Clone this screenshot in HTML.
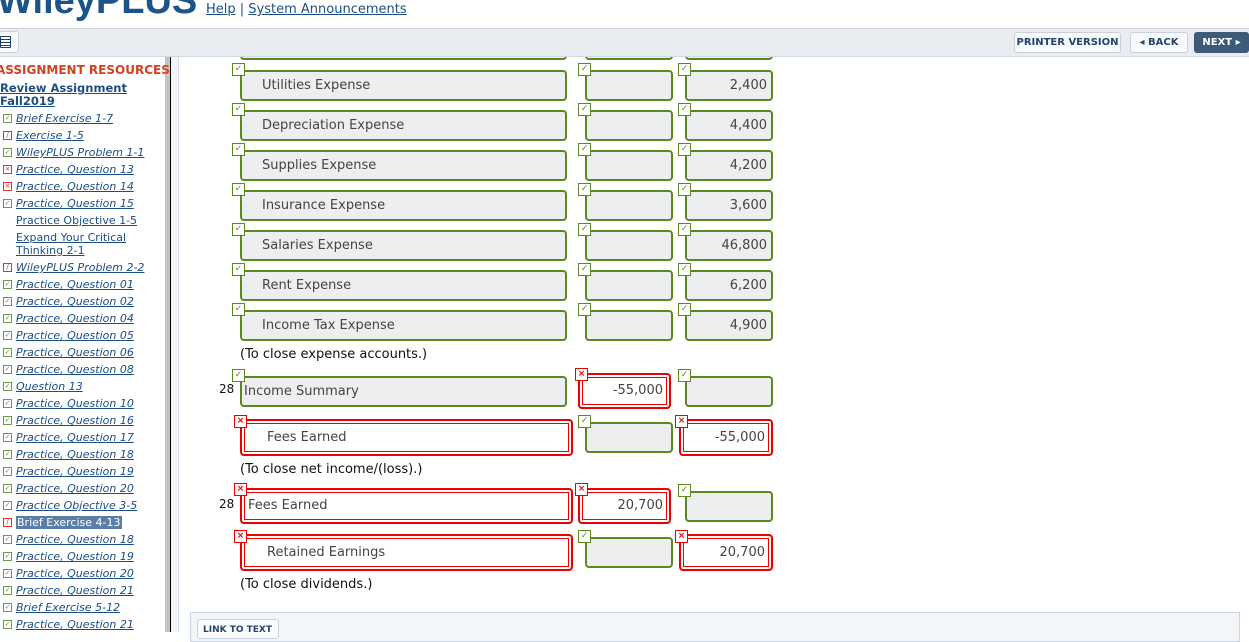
<!DOCTYPE html>
<html><head><meta charset="utf-8"><style>
*{margin:0;padding:0;box-sizing:border-box}
body{width:1249px;height:632px;overflow:hidden;background:#fff;font-family:Verdana,"DejaVu Sans","Liberation Sans",sans-serif;position:relative}
.a{position:absolute}
.logo{left:-3px;top:-20px;font:bold 38px "Liberation Sans",sans-serif;color:#1c5489;z-index:3}
.hl{left:206px;top:2px;font-size:13px;color:#1c4e86;z-index:3}
.hl u{color:#1c4e86}
.bar{left:0;top:28px;width:1249px;height:29px;background:#e9edf1;border-top:1px solid #cfd6de;border-bottom:1px solid #d4dae1;z-index:2}
.btn{top:32px;height:21px;border:1px solid #c9d1da;border-radius:3px;background:#f7f9fb;font:bold 10px "DejaVu Sans",sans-serif;color:#27446b;line-height:19px;text-align:center;z-index:3;white-space:nowrap}
.ar{left:-4px;top:63px;font:bold 12px "DejaVu Sans",sans-serif;color:#d5401e}
.ra{left:0;top:82px;font:bold 11.5px "DejaVu Sans",sans-serif;color:#1c4e86;text-decoration:underline;line-height:13px}
.li{left:16px;font:italic 11px "DejaVu Sans",sans-serif;color:#1c4e86;text-decoration:underline;white-space:nowrap}
.li.n{font-style:normal}
.ic{left:3px;width:9px;height:9px;border:1px solid #6c9a4a;font-size:7px;line-height:7px;text-align:center;color:#6c9a4a}
.ic.r{border-color:#d33;color:#d33}
.box{border:2px solid #5a8a1f;border-radius:4px;background:#eceeef;font:13px "DejaVu Sans",sans-serif;color:#444;line-height:27px}
.rb{border:2px solid #e00;border-radius:4px;background:#fff;box-shadow:inset 0 0 0 2px #fff,inset 0 0 0 3px #e00;font:13px "DejaVu Sans",sans-serif;color:#444}
.ck{width:13px;height:13px;background:#fff;border:1px solid #5a8a1f;font-size:9px;line-height:10px;text-align:center;color:#5a8a1f}
.ck.x{border-color:#e00;color:#e00;font-weight:bold}
.t{font:13px "DejaVu Sans",sans-serif;color:#111}
.num{text-align:right;padding-right:4px}
</style></head><body>
<div class="a logo">WileyPLUS</div>
<div class="a hl"><u>Help</u> | <u>System Announcements</u></div>
<div class="a bar"></div>
<div class="a" style="left:-2px;top:31px;width:21px;height:22px;border:1px solid #c9d1da;border-radius:3px;background:#f7f9fb;z-index:3"></div>
<div class="a" style="left:0;top:36px;width:11px;height:12px;border:1.5px solid #1c3e6b;border-radius:1px;background:repeating-linear-gradient(#fff 0 2px,#1c3e6b 2px 3px);z-index:3"></div>
<div class="a btn" style="left:1014px;width:107px">PRINTER VERSION</div>
<div class="a btn" style="left:1130px;width:58px">◂ BACK</div>
<div class="a btn" style="left:1194px;width:55px;background:#3d5a7a;border-color:#3d5a7a;color:#fff">NEXT ▸</div>
<div class="a" style="left:165px;top:57px;width:5px;height:575px;background:#c4c4c4"></div>
<div class="a" style="left:170px;top:57px;width:1px;height:575px;background:#000"></div>
<div class="a" style="left:171px;top:57px;width:8px;height:575px;background:#f2f6fa;border-right:1px solid #d8e0e8"></div>
<div class="a ar">ASSIGNMENT RESOURCES</div>
<div class="a ra">Review Assignment<br>Fall2019</div>

<div class="a ic" style="top:114px">✓</div><div class="a li" style="top:112px">Brief Exercise 1-7</div>
<div class="a ic r" style="top:131px">/</div><div class="a li" style="top:129px">Exercise 1-5</div>
<div class="a ic" style="top:148px">✓</div><div class="a li" style="top:146px">WileyPLUS Problem 1-1</div>
<div class="a ic r" style="top:165px">×</div><div class="a li" style="top:163px">Practice, Question 13</div>
<div class="a ic r" style="top:182px">×</div><div class="a li" style="top:180px">Practice, Question 14</div>
<div class="a ic" style="top:199px">✓</div><div class="a li" style="top:197px">Practice, Question 15</div>
<div class="a li n" style="top:214px">Practice Objective 1-5</div>
<div class="a li n" style="top:231px;line-height:13px">Expand Your Critical<br>Thinking 2-1</div>
<div class="a ic r" style="top:263px">/</div><div class="a li" style="top:261px">WileyPLUS Problem 2-2</div>
<div class="a ic" style="top:280px">✓</div><div class="a li" style="top:278px">Practice, Question 01</div>
<div class="a ic" style="top:297px">✓</div><div class="a li" style="top:295px">Practice, Question 02</div>
<div class="a ic" style="top:314px">✓</div><div class="a li" style="top:312px">Practice, Question 04</div>
<div class="a ic" style="top:331px">✓</div><div class="a li" style="top:329px">Practice, Question 05</div>
<div class="a ic" style="top:348px">✓</div><div class="a li" style="top:346px">Practice, Question 06</div>
<div class="a ic" style="top:365px">✓</div><div class="a li" style="top:363px">Practice, Question 08</div>
<div class="a ic" style="top:382px">✓</div><div class="a li" style="top:380px">Question 13</div>
<div class="a ic" style="top:399px">✓</div><div class="a li" style="top:397px">Practice, Question 10</div>
<div class="a ic" style="top:416px">✓</div><div class="a li" style="top:414px">Practice, Question 16</div>
<div class="a ic" style="top:433px">✓</div><div class="a li" style="top:431px">Practice, Question 17</div>
<div class="a ic" style="top:450px">✓</div><div class="a li" style="top:448px">Practice, Question 18</div>
<div class="a ic" style="top:467px">✓</div><div class="a li" style="top:465px">Practice, Question 19</div>
<div class="a ic" style="top:484px">✓</div><div class="a li" style="top:482px">Practice, Question 20</div>
<div class="a ic" style="top:501px">✓</div><div class="a li" style="top:499px">Practice Objective 3-5</div>
<div class="a ic r" style="top:518px">/</div><div class="a li n" style="top:516px;background:#5a7fa6;color:#fff;text-decoration:none;padding:0 1px">Brief Exercise 4-13</div>
<div class="a ic" style="top:535px">✓</div><div class="a li" style="top:533px">Practice, Question 18</div>
<div class="a ic" style="top:552px">✓</div><div class="a li" style="top:550px">Practice, Question 19</div>
<div class="a ic" style="top:569px">✓</div><div class="a li" style="top:567px">Practice, Question 20</div>
<div class="a ic" style="top:586px">✓</div><div class="a li" style="top:584px">Practice, Question 21</div>
<div class="a ic" style="top:603px">✓</div><div class="a li" style="top:601px">Brief Exercise 5-12</div>
<div class="a ic" style="top:620px">✓</div><div class="a li" style="top:618px">Practice, Question 21</div>

<div class="a box" style="left:240px;top:30px;width:327px;height:30px"></div>
<div class="a box" style="left:585px;top:30px;width:88px;height:30px"></div>
<div class="a box" style="left:685px;top:30px;width:88px;height:30px"></div>

<div class="a box" style="left:240px;top:70px;width:327px;height:31px;padding-left:20px">Utilities Expense</div>
<div class="a box" style="left:585px;top:70px;width:88px;height:31px"></div>
<div class="a box num" style="left:685px;top:70px;width:88px;height:31px">2,400</div>
<div class="a ck" style="left:232px;top:63px">✓</div><div class="a ck" style="left:578px;top:63px">✓</div><div class="a ck" style="left:678px;top:63px">✓</div>

<div class="a box" style="left:240px;top:110px;width:327px;height:31px;padding-left:20px">Depreciation Expense</div>
<div class="a box" style="left:585px;top:110px;width:88px;height:31px"></div>
<div class="a box num" style="left:685px;top:110px;width:88px;height:31px">4,400</div>
<div class="a ck" style="left:232px;top:103px">✓</div><div class="a ck" style="left:578px;top:103px">✓</div><div class="a ck" style="left:678px;top:103px">✓</div>

<div class="a box" style="left:240px;top:150px;width:327px;height:31px;padding-left:20px">Supplies Expense</div>
<div class="a box" style="left:585px;top:150px;width:88px;height:31px"></div>
<div class="a box num" style="left:685px;top:150px;width:88px;height:31px">4,200</div>
<div class="a ck" style="left:232px;top:143px">✓</div><div class="a ck" style="left:578px;top:143px">✓</div><div class="a ck" style="left:678px;top:143px">✓</div>

<div class="a box" style="left:240px;top:190px;width:327px;height:31px;padding-left:20px">Insurance Expense</div>
<div class="a box" style="left:585px;top:190px;width:88px;height:31px"></div>
<div class="a box num" style="left:685px;top:190px;width:88px;height:31px">3,600</div>
<div class="a ck" style="left:232px;top:183px">✓</div><div class="a ck" style="left:578px;top:183px">✓</div><div class="a ck" style="left:678px;top:183px">✓</div>

<div class="a box" style="left:240px;top:230px;width:327px;height:31px;padding-left:20px">Salaries Expense</div>
<div class="a box" style="left:585px;top:230px;width:88px;height:31px"></div>
<div class="a box num" style="left:685px;top:230px;width:88px;height:31px">46,800</div>
<div class="a ck" style="left:232px;top:223px">✓</div><div class="a ck" style="left:578px;top:223px">✓</div><div class="a ck" style="left:678px;top:223px">✓</div>

<div class="a box" style="left:240px;top:270px;width:327px;height:31px;padding-left:20px">Rent Expense</div>
<div class="a box" style="left:585px;top:270px;width:88px;height:31px"></div>
<div class="a box num" style="left:685px;top:270px;width:88px;height:31px">6,200</div>
<div class="a ck" style="left:232px;top:263px">✓</div><div class="a ck" style="left:578px;top:263px">✓</div><div class="a ck" style="left:678px;top:263px">✓</div>

<div class="a box" style="left:240px;top:310px;width:327px;height:31px;padding-left:20px">Income Tax Expense</div>
<div class="a box" style="left:585px;top:310px;width:88px;height:31px"></div>
<div class="a box num" style="left:685px;top:310px;width:88px;height:31px">4,900</div>
<div class="a ck" style="left:232px;top:303px">✓</div><div class="a ck" style="left:578px;top:303px">✓</div><div class="a ck" style="left:678px;top:303px">✓</div>

<div class="a t" style="left:240px;top:347px">(To close expense accounts.)</div>

<div class="a t" style="left:219px;top:382px;font-size:12px">28</div>
<div class="a box" style="left:240px;top:376px;width:327px;height:31px;padding-left:2px">Income Summary</div>
<div class="a rb num" style="left:578px;top:373px;width:93px;height:36px;line-height:32px;padding-right:6px">-55,000</div>
<div class="a box" style="left:685px;top:376px;width:88px;height:31px"></div>
<div class="a ck" style="left:232px;top:369px">✓</div><div class="a ck x" style="left:575px;top:368px">×</div><div class="a ck" style="left:678px;top:369px">✓</div>

<div class="a rb" style="left:240px;top:419px;width:333px;height:37px;line-height:33px;padding-left:25px">Fees Earned</div>
<div class="a box" style="left:585px;top:422px;width:88px;height:31px"></div>
<div class="a rb num" style="left:679px;top:419px;width:94px;height:37px;line-height:33px;padding-right:6px">-55,000</div>
<div class="a ck x" style="left:234px;top:415px">×</div><div class="a ck" style="left:578px;top:415px">✓</div><div class="a ck x" style="left:675px;top:415px">×</div>

<div class="a t" style="left:240px;top:462px">(To close net income/(loss).)</div>

<div class="a t" style="left:219px;top:497px;font-size:12px">28</div>
<div class="a rb" style="left:240px;top:488px;width:333px;height:36px;line-height:32px;padding-left:6px">Fees Earned</div>
<div class="a rb num" style="left:578px;top:488px;width:93px;height:36px;line-height:32px;padding-right:6px">20,700</div>
<div class="a box" style="left:685px;top:491px;width:88px;height:31px"></div>
<div class="a ck x" style="left:234px;top:483px">×</div><div class="a ck x" style="left:575px;top:483px">×</div><div class="a ck" style="left:678px;top:484px">✓</div>

<div class="a rb" style="left:240px;top:534px;width:333px;height:37px;line-height:33px;padding-left:25px">Retained Earnings</div>
<div class="a box" style="left:585px;top:537px;width:88px;height:31px"></div>
<div class="a rb num" style="left:679px;top:534px;width:94px;height:37px;line-height:33px;padding-right:6px">20,700</div>
<div class="a ck x" style="left:234px;top:530px">×</div><div class="a ck" style="left:578px;top:530px">✓</div><div class="a ck x" style="left:675px;top:530px">×</div>

<div class="a t" style="left:240px;top:577px">(To close dividends.)</div>

<div class="a" style="left:190px;top:612px;width:1050px;height:30px;background:#f3f6f9;border:1px solid #cdd6e0"></div>
<div class="a" style="left:197px;top:619px;width:82px;height:20px;border:1px solid #c9d1da;border-radius:3px;background:#fafbfc;font:bold 9px 'DejaVu Sans',sans-serif;color:#27446b;padding:5px 0 0 5px;white-space:nowrap">LINK TO TEXT</div>
</body></html>
